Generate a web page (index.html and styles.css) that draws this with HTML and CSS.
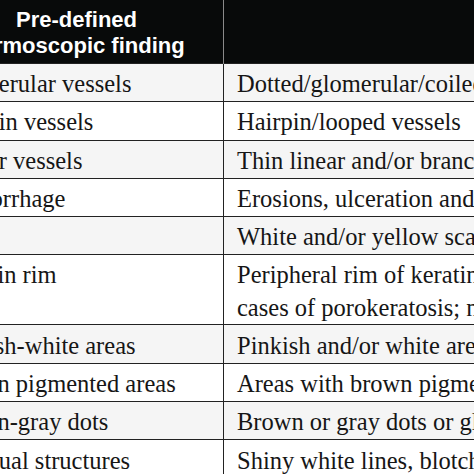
FILE: index.html
```html
<!DOCTYPE html>
<html>
<head>
<meta charset="utf-8">
<link rel="stylesheet" href="styles.css">
</head>
<body>
<div class="viewport">
<table class="findings">
  <thead>
    <tr>
      <th class="col-a">Pre-defined<br>dermoscopic finding</th>
      <th class="col-b"></th>
    </tr>
  </thead>
  <tbody>
    <tr class="shade"><td>Glomerular vessels</td><td>Dotted/glomerular/coiled vessels</td></tr>
    <tr><td>Hairpin vessels</td><td>Hairpin/looped vessels</td></tr>
    <tr class="shade"><td>Linear vessels</td><td>Thin linear and/or branched vessels</td></tr>
    <tr><td>Hemorrhage</td><td>Erosions, ulceration and/or hemorrhage</td></tr>
    <tr class="shade"><td>Scale</td><td>White and/or yellow scales</td></tr>
    <tr class="tall"><td>Keratin rim</td><td>Peripheral rim of keratin seen in<br>cases of porokeratosis; not considered</td></tr>
    <tr class="shade"><td>Pinkish-white areas</td><td>Pinkish and/or white areas</td></tr>
    <tr><td>Brown pigmented areas</td><td>Areas with brown pigmentation</td></tr>
    <tr class="shade"><td>Brown-gray dots</td><td>Brown or gray dots or globules</td></tr>
    <tr><td>Residual structures</td><td>Shiny white lines, blotches</td></tr>
  </tbody>
</table>
</div>
</body>
</html>
```
FILE: styles.css
```css
html, body {
  margin: 0;
  padding: 0;
  background: #ffffff;
}
.viewport {
  width: 474px;
  height: 474px;
  overflow: hidden;
}
.findings {
  border-collapse: collapse;
  margin-left: -70px;
  table-layout: fixed;
  width: 900px;
  font-family: "Liberation Serif", "Times New Roman", serif;
  font-size: 24.5px;
  color: #161616;
}
.findings th {
  background: #080a0a;
  color: #ffffff;
  font-family: "Liberation Sans", Arial, sans-serif;
  font-weight: bold;
  font-size: 22px;
  line-height: 26px;
  height: 61px;
  padding: 2px 0 0 0;
  text-align: center;
  vertical-align: middle;
  white-space: nowrap;
}
.findings th.col-a {
  width: 293px;
  border-right: 1.5px solid #8a8a8a;
}
.findings th.col-b {
  width: auto;
}
.findings td {
  height: 35.3px;
  padding: 2px 0 0 13px;
  line-height: 33px;
  white-space: nowrap;
  vertical-align: middle;
  border-top: 1.5px solid #222;
  border-bottom: 1.5px solid #222;
  border-right: 1.5px solid #222;
  overflow: hidden;
}
.findings tr.shade td {
  background: #f5f5f5;
}
.findings tr.tall td {
  height: 66px;
  vertical-align: top;
  padding-top: 3px;
}
```
